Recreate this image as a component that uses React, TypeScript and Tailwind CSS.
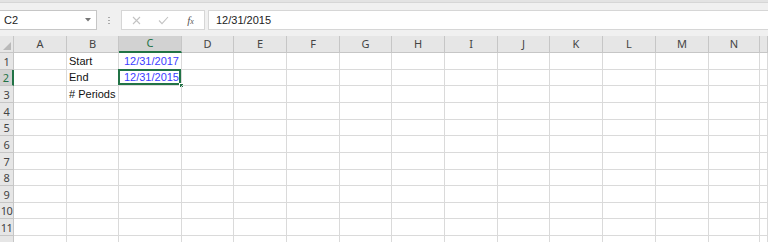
import React from "react";

const cols = ["A","B","C","D","E","F","G","H","I","J","K","L","M","N",""];
const rows = [1,2,3,4,5,6,7,8,9,10,11,12];

export default function App() {
  return (
    <div className="w-[768px] h-[242px] overflow-hidden bg-[#f0f0f0] flex flex-col" style={{ fontFamily: '"Liberation Sans", Arial, sans-serif' }}>
      <div className="h-[3px] bg-[#e3e3e3] border-b border-[#d6d6d6] shrink-0" />
      <div className="h-[33px] shrink-0 flex items-start pt-[7px]">
        <div className="w-[97px] h-[20px] bg-white border border-[#c6c6c6] border-l-0 flex items-center justify-between pl-[4px] pr-[5px] text-[11px] text-[#222]">
          <span>C2</span>
          <svg width="6" height="4" viewBox="0 0 6 4"><path d="M0 0h6L3 3.5z" fill="#777" /></svg>
        </div>
        <div className="w-[24px] h-[20px] flex flex-col items-center justify-center gap-[2px]">
          <div className="w-[2px] h-[1px] bg-[#aaa]" />
          <div className="w-[2px] h-[1px] bg-[#aaa]" />
          <div className="w-[2px] h-[1px] bg-[#aaa]" />
        </div>
        <div className="w-[84px] h-[20px] bg-white border border-[#d6d6d6] flex items-center">
          <div className="w-[28px] flex justify-center">
            <svg width="9" height="9" viewBox="0 0 9 9"><path d="M1 1l7 7M8 1L1 8" stroke="#c3c3c3" strokeWidth="1.1" /></svg>
          </div>
          <div className="w-[27px] flex justify-center">
            <svg width="11" height="9" viewBox="0 0 11 9"><path d="M1 4.5l3 3.2L10 1" stroke="#c3c3c3" strokeWidth="1.1" fill="none" /></svg>
          </div>
          <div className="w-[27px] flex justify-center text-[11px] italic text-[#555]" style={{ fontFamily: '"Liberation Serif", serif' }}>
            <span>f<span className="text-[8px]">x</span></span>
          </div>
        </div>
        <div className="w-[3px]" />
        <div className="flex-1 h-[20px] bg-white border border-r-0 border-[#d6d6d6] flex items-center pl-[7px] text-[11px] text-[#222]">
          12/31/2015
        </div>
      </div>
      <div
        className="grid grid-cols-[14px_53px_52px_63px_52px_53px_53px_52px_53px_53px_52px_53px_53px_53px_51px_1fr] grid-rows-[17px_17px_16px_17px_17px_16px_17px_17px_16px_17px_16px_17px_20px] bg-white"
      >
        {/* header row */}
        <div className="bg-[#e6e6e6] border-r border-b border-[#c6c6c6] flex items-end justify-end pr-[2px] pb-[2px]">
          <svg width="8" height="8" viewBox="0 0 8 8"><path d="M8 0V8H0z" fill="#b9b9b9" /></svg>
        </div>
        {cols.map((c, i) =>
          c === "C" ? (
            <div key={i} className="bg-[#d2d2d2] border-r border-[#c6c6c6] border-b-2 border-b-[#217346] flex items-center justify-center text-[11px] text-[#217346]" style={{ fontFamily: '"Noto Sans", sans-serif' }}>
              {c}
            </div>
          ) : (
            <div key={i} className="bg-[#e6e6e6] border-r border-b border-[#c6c6c6] flex items-center justify-center text-[11px] text-[#444]" style={{ fontFamily: '"Noto Sans", sans-serif' }}>
              {c}
            </div>
          )
        )}
        {rows.map((r) => (
          <React.Fragment key={r}>
            {r === 2 ? (
              <div className="bg-[#d2d2d2] border-b border-[#c6c6c6] border-r-2 border-r-[#217346] flex items-center justify-center text-[11px] text-[#217346] leading-none" style={{ fontFamily: '"Noto Sans", sans-serif' }}>
                {r}
              </div>
            ) : (
              <div className="bg-[#e6e6e6] border-r border-b border-[#c6c6c6] flex items-center justify-center text-[11px] text-[#444] leading-none tracking-[-0.5px]" style={{ fontFamily: '"Noto Sans", sans-serif' }}>
                {r}
              </div>
            )}
            {cols.map((c, i) => {
              let content: React.ReactNode = null;
              let cls = "border-r border-b border-[#dadada] flex items-center text-[11px] whitespace-nowrap overflow-visible relative";
              if (c === "B" && r === 1) content = <span className="pl-[2px] text-[#111]">Start</span>;
              if (c === "B" && r === 2) content = <span className="pl-[2px] text-[#111]">End</span>;
              if (c === "B" && r === 3) content = <span className="pl-[2px] text-[#111]">{"# Periods"}</span>;
              if (c === "C" && r === 1) content = <span className="w-full text-right pr-[2px] text-[#3c3cff]">12/31/2017</span>;
              if (c === "C" && r === 2)
                content = (
                  <>
                    <span className="w-full text-right pr-[2px] text-[#3c3cff]">12/31/2015</span>
                    <div className="absolute -left-px -top-px -right-0 -bottom-0 border-2 border-[#217346]" />
                    <div className="absolute -right-[3px] -bottom-[3px] w-[5px] h-[5px] bg-[#217346] border border-white" />
                  </>
                );
              return (
                <div key={i} className={cls}>
                  {content}
                </div>
              );
            })}
          </React.Fragment>
        ))}
      </div>
    </div>
  );
}
